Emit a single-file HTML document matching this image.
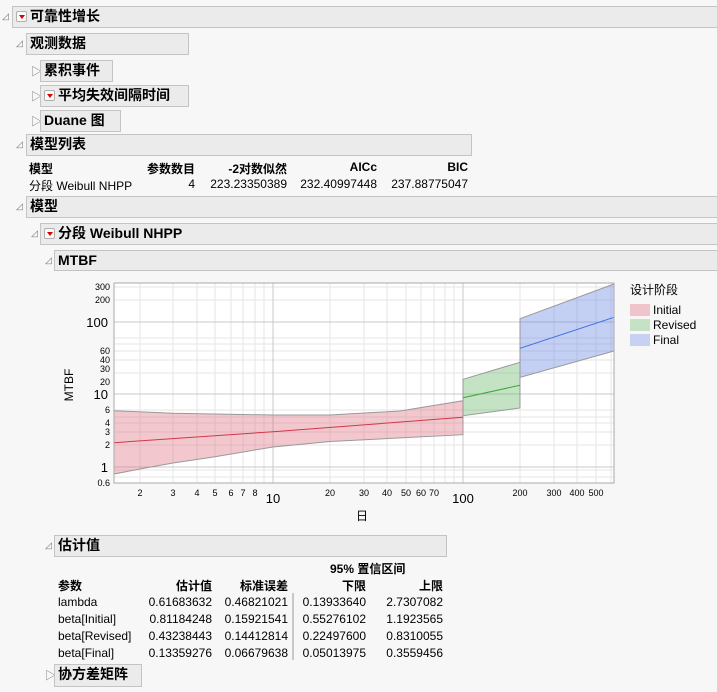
<!DOCTYPE html>
<html><head><meta charset="utf-8"><style>
body{margin:0;width:717px;height:692px;background:#f7f7f7;position:relative;overflow:hidden;font-family:"Liberation Sans","Noto Sans CJK SC",sans-serif;color:#000}
.h{position:absolute;background:#ebebeb;border:1px solid #c4c4c4;box-sizing:border-box;font-weight:bold;font-size:14px;line-height:19px;padding-left:3px;white-space:nowrap}
.tri{position:absolute;font-size:9px;color:#777}
.m{display:inline-block;width:11px;height:11px;border:1px solid #b0b0b0;background:#fafafa;border-radius:2px;vertical-align:-1px;margin-right:3px;position:relative;box-sizing:border-box}
.m:after{content:"";position:absolute;left:2px;top:3px;border-left:3px solid transparent;border-right:3px solid transparent;border-top:4px solid #d00}
.t{position:absolute;font-size:12px;white-space:nowrap}
.b{font-weight:bold}
.r{text-align:right}
</style></head><body>
<span class="tri" style="left:2px;top:11px">◿</span>
<div class="h" style="left:12px;top:6px;width:710px;height:22px"><span class="m"></span>可靠性增长</div>
<span class="tri" style="left:16px;top:38px">◿</span>
<div class="h" style="left:26px;top:33px;width:163px;height:22px">观测数据</div>
<span class="tri" style="left:31px;top:63px;font-size:11px">▷</span>
<div class="h" style="left:40px;top:60px;width:73px;height:22px">累积事件</div>
<span class="tri" style="left:31px;top:88px;font-size:11px">▷</span>
<div class="h" style="left:40px;top:85px;width:149px;height:22px"><span class="m"></span>平均失效间隔时间</div>
<span class="tri" style="left:31px;top:113px;font-size:11px">▷</span>
<div class="h" style="left:40px;top:110px;width:81px;height:22px">Duane 图</div>
<span class="tri" style="left:16px;top:139px">◿</span>
<div class="h" style="left:26px;top:134px;width:446px;height:22px">模型列表</div>
<div class="t b" style="left:29px;top:160px">模型</div>
<div class="t b r" style="left:140px;top:160px;width:55px">参数数目</div>
<div class="t b r" style="left:200px;top:160px;width:87px">-2对数似然</div>
<div class="t b r" style="left:290px;top:160px;width:87px">AICc</div>
<div class="t b r" style="left:380px;top:160px;width:88px">BIC</div>
<div class="t" style="left:29px;top:177px">分段 Weibull NHPP</div>
<div class="t r" style="left:140px;top:177px;width:55px">4</div>
<div class="t r" style="left:200px;top:177px;width:87px">223.23350389</div>
<div class="t r" style="left:290px;top:177px;width:87px">232.40997448</div>
<div class="t r" style="left:380px;top:177px;width:88px">237.88775047</div>
<span class="tri" style="left:16px;top:201px">◿</span>
<div class="h" style="left:26px;top:196px;width:700px;height:22px">模型</div>
<span class="tri" style="left:31px;top:228px">◿</span>
<div class="h" style="left:40px;top:223px;width:690px;height:22px"><span class="m"></span>分段 Weibull NHPP</div>
<span class="tri" style="left:45px;top:255px">◿</span>
<div class="h" style="left:54px;top:250px;width:680px;height:21px">MTBF</div>

<svg style="position:absolute;left:0;top:0" width="717" height="692" font-family="Liberation Sans, sans-serif">
<rect x="114" y="283" width="500" height="200" fill="#fff"/>
<g stroke="#e6e6e6" stroke-width="1">
<line x1="140" y1="283" x2="140" y2="483"/><line x1="173" y1="283" x2="173" y2="483"/><line x1="197" y1="283" x2="197" y2="483"/><line x1="215" y1="283" x2="215" y2="483"/><line x1="231" y1="283" x2="231" y2="483"/><line x1="243" y1="283" x2="243" y2="483"/><line x1="255" y1="283" x2="255" y2="483"/><line x1="264" y1="283" x2="264" y2="483"/>
<line x1="330" y1="283" x2="330" y2="483"/><line x1="364" y1="283" x2="364" y2="483"/><line x1="387" y1="283" x2="387" y2="483"/><line x1="406" y1="283" x2="406" y2="483"/><line x1="421" y1="283" x2="421" y2="483"/><line x1="434" y1="283" x2="434" y2="483"/><line x1="445" y1="283" x2="445" y2="483"/><line x1="454" y1="283" x2="454" y2="483"/>
<line x1="520" y1="283" x2="520" y2="483"/><line x1="554" y1="283" x2="554" y2="483"/><line x1="577" y1="283" x2="577" y2="483"/><line x1="596" y1="283" x2="596" y2="483"/><line x1="611" y1="283" x2="611" y2="483"/>
<line x1="114" y1="287" x2="614" y2="287"/><line x1="114" y1="300" x2="614" y2="300"/><line x1="114" y1="338" x2="614" y2="338"/><line x1="114" y1="344" x2="614" y2="344"/><line x1="114" y1="351" x2="614" y2="351"/><line x1="114" y1="360" x2="614" y2="360"/><line x1="114" y1="373" x2="614" y2="373"/>
<line x1="114" y1="410" x2="614" y2="410"/><line x1="114" y1="417" x2="614" y2="417"/><line x1="114" y1="423" x2="614" y2="423"/><line x1="114" y1="432" x2="614" y2="432"/><line x1="114" y1="445" x2="614" y2="445"/>
<line x1="114" y1="470" x2="614" y2="470"/><line x1="114" y1="477" x2="614" y2="477"/>
</g>
<g stroke="#c8c8c8"><line x1="273" y1="283" x2="273" y2="483"/><line x1="463" y1="283" x2="463" y2="483"/><line x1="114" y1="322" x2="614" y2="322"/><line x1="114" y1="394" x2="614" y2="394"/><line x1="114" y1="467" x2="614" y2="467"/></g>
<path d="M114,410.7 L173,413.3 L273,415 L330,415 L400,411 L463,400.7 L463,434.7 L330,441.5 L273,447 L215,456.7 L173,463 L140,469 L114,474 Z" fill="rgba(220,110,125,0.38)" stroke="#999" stroke-width="1"/>
<path d="M114,442.7 L273,431.7 L463,417.3" stroke="#d0384a" fill="none"/>
<path d="M463,379.3 L520,362.3 L520,408 L463,415.7 Z" fill="rgba(100,180,100,0.38)" stroke="#999"/>
<path d="M463,397.7 L520,385.3" stroke="#38a838" fill="none"/>
<path d="M520,318.7 L614,284 L614,351 L520,377.3 Z" fill="rgba(100,130,225,0.38)" stroke="#999"/>
<path d="M520,348.3 L614,317.3" stroke="#3a6de0" fill="none"/>
<rect x="114" y="283" width="500" height="200" fill="none" stroke="#aaa"/>
<g font-size="9" text-anchor="end" fill="#000">
<text x="110" y="290">300</text><text x="110" y="303">200</text><text x="110" y="354">60</text><text x="110" y="363">40</text><text x="110" y="372">30</text><text x="110" y="376" display="none"></text><text x="110" y="376"></text><text x="110" y="385">20</text><text x="110" y="413">6</text><text x="110" y="426">4</text><text x="110" y="435">3</text><text x="110" y="448">2</text><text x="110" y="486">0.6</text>
</g>
<g font-size="13" text-anchor="end"><text x="108" y="327">100</text><text x="108" y="399">10</text><text x="108" y="472">1</text></g>
<g font-size="9" text-anchor="middle">
<text x="140" y="496">2</text><text x="173" y="496">3</text><text x="197" y="496">4</text><text x="215" y="496">5</text><text x="231" y="496">6</text><text x="243" y="496">7</text><text x="255" y="496">8</text>
<text x="330" y="496">20</text><text x="364" y="496">30</text><text x="387" y="496">40</text><text x="406" y="496">50</text><text x="421" y="496">60</text><text x="434" y="496">70</text>
<text x="520" y="496">200</text><text x="554" y="496">300</text><text x="577" y="496">400</text><text x="596" y="496">500</text>
</g>
<g font-size="13" text-anchor="middle"><text x="273" y="503">10</text><text x="463" y="503">100</text></g>
<text x="362" y="520" font-size="12" text-anchor="middle" font-family="Noto Sans CJK SC, sans-serif">日</text>
<text transform="translate(73,385) rotate(-90)" font-size="12" text-anchor="middle">MTBF</text>
<text x="630" y="294" font-size="12" font-family="Noto Sans CJK SC, sans-serif">设计阶段</text>
<rect x="630" y="304" width="20" height="12" fill="#efc4ca"/><text x="653" y="314" font-size="12">Initial</text>
<rect x="630" y="319" width="20" height="12" fill="#c6e2c6"/><text x="653" y="329" font-size="12">Revised</text>
<rect x="630" y="334" width="20" height="12" fill="#c6d1f4"/><text x="653" y="344" font-size="12">Final</text>
<line x1="293" y1="593" x2="293" y2="660" stroke="#999"/>
</svg>

<span class="tri" style="left:45px;top:540px">◿</span>
<div class="h" style="left:54px;top:535px;width:393px;height:22px">估计值</div>
<div class="t b" style="left:330px;top:560px">95% 置信区间</div>
<div class="t b" style="left:58px;top:577px">参数</div>
<div class="t b r" style="left:140px;top:577px;width:72px">估计值</div>
<div class="t b r" style="left:216px;top:577px;width:72px">标准误差</div>
<div class="t b r" style="left:294px;top:577px;width:72px">下限</div>
<div class="t b r" style="left:370px;top:577px;width:73px">上限</div>
<div class="t" style="left:58px;top:594px;line-height:17px">lambda<br>beta[Initial]<br>beta[Revised]<br>beta[Final]</div>
<div class="t r" style="left:140px;top:594px;width:72px;line-height:17px">0.61683632<br>0.81184248<br>0.43238443<br>0.13359276</div>
<div class="t r" style="left:216px;top:594px;width:72px;line-height:17px">0.46821021<br>0.15921541<br>0.14412814<br>0.06679638</div>
<div class="t r" style="left:294px;top:594px;width:72px;line-height:17px">0.13933640<br>0.55276102<br>0.22497600<br>0.05013975</div>
<div class="t r" style="left:370px;top:594px;width:73px;line-height:17px">2.7307082<br>1.1923565<br>0.8310055<br>0.3559456</div>
<span class="tri" style="left:45px;top:667px;font-size:11px">▷</span>
<div class="h" style="left:54px;top:664px;width:88px;height:23px">协方差矩阵</div>
</body></html>
